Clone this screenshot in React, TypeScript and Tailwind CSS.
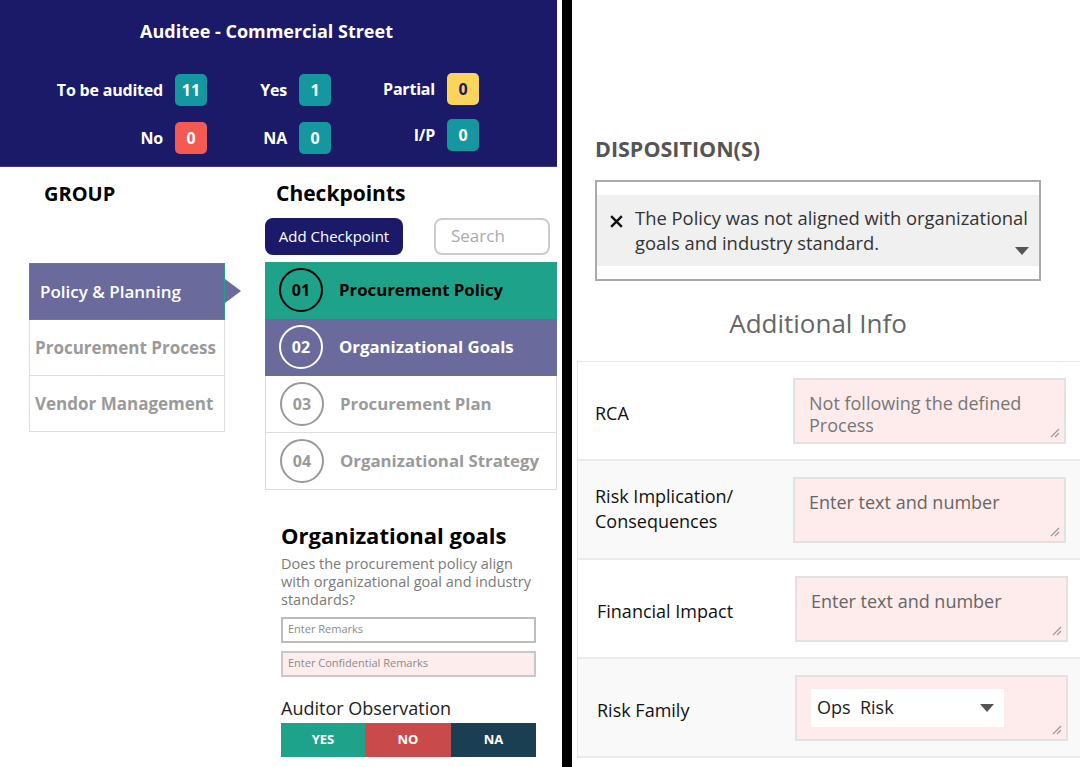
import React from "react";

const font = { fontFamily: '"Open Sans", "Liberation Sans", sans-serif' };

const STATS = [
  [
    { label: "To be audited", value: "11", tone: "teal" },
    { label: "Yes", value: "1", tone: "teal" },
    { label: "Partial", value: "0", tone: "yellow" },
  ],
  [
    { label: "No", value: "0", tone: "red" },
    { label: "NA", value: "0", tone: "teal" },
    { label: "I/P", value: "0", tone: "teal" },
  ],
];

const toneClass: Record<string, string> = {
  teal: "bg-[#14979f] text-white",
  red: "bg-[#f45a52] text-white",
  yellow: "bg-[#fad45b] text-[#1a1a68]",
};

const GROUPS = ["Policy & Planning", "Procurement Process", "Vendor Management"];

const CHECKPOINTS = [
  { no: "01", title: "Procurement Policy", state: "done" },
  { no: "02", title: "Organizational Goals", state: "active" },
  { no: "03", title: "Procurement Plan", state: "idle" },
  { no: "04", title: "Organizational Strategy", state: "idle" },
];

function ResizeHandle() {
  return (
    <svg
      className="absolute right-[4px] bottom-[4px]"
      width="11"
      height="11"
      viewBox="0 0 11 11"
    >
      <path d="M10 2 L2 10 M10 6 L6 10" stroke="#9a9a9a" strokeWidth="1.2" />
    </svg>
  );
}

function Caret({ className }: { className?: string }) {
  return (
    <svg className={className} width="14" height="8" viewBox="0 0 14 8">
      <path d="M0 0 H14 L7 8 Z" fill="#555" />
    </svg>
  );
}

function Header() {
  return (
    <div className="h-[167px] bg-[#1a1a68] border-b border-[#3a3a8a] text-white">
      <div className="pt-[18px] text-center text-[18px] font-bold pr-[24px]">
        Auditee - Commercial Street
      </div>
      <div className="mt-[29px] ml-[40px] grid grid-cols-[167px_124px_148px] gap-y-[16px]">
        {STATS.flatMap((row, r) =>
          row.map((s, c) => (
            <div
              key={`${r}-${c}`}
              className={
                "flex items-center justify-end gap-[12px] " +
                (c === 2 ? "-mt-[3px]" : "") +
                (c === 2 && r === 1 ? " -mt-[6px]" : "")
              }
            >
              <span className="text-[16px] font-bold tracking-[-0.2px]">{s.label}</span>
              <span
                className={
                  "w-[32px] h-[32px] rounded-[5px] flex items-center justify-center text-[16px] font-bold " +
                  toneClass[s.tone]
                }
              >
                {s.value}
              </span>
            </div>
          ))
        )}
      </div>
    </div>
  );
}

function GroupColumn() {
  return (
    <div className="w-[265px] shrink-0">
      <div className="pl-[44px] pt-[12px] text-[20px] font-bold text-black">GROUP</div>
      <div className="mt-[54px] ml-[29px] w-[196px]">
        {GROUPS.map((g, i) =>
          i === 0 ? (
            <div
              key={g}
              className="relative h-[57px] bg-[#6b6a9d] border border-[#1ea38a] flex items-center pl-[10px] text-[17px] font-semibold text-white"
            >
              {g}
              <span className="absolute right-[-17px] top-[15px] w-0 h-0 border-y-[12px] border-y-transparent border-l-[16px] border-l-[#6b6a9d]" />
            </div>
          ) : (
            <div
              key={g}
              className="h-[56px] border border-t-0 border-[#dddddd] flex items-center pl-[5px] text-[17px] font-bold text-[#9a9a9a]"
            >
              {g}
            </div>
          )
        )}
      </div>
    </div>
  );
}

function CheckpointColumn() {
  return (
    <div className="w-[292px] shrink-0">
      <div className="pl-[11px] pt-[11px] text-[21px] font-bold text-black">Checkpoints</div>
      <div className="mt-[8px] flex items-center justify-between pr-[7px]">
        <button
          type="button"
          className="w-[138px] h-[37px] rounded-[8px] bg-[#1a1a68] text-white text-[15px]"
        >
          Add Checkpoint
        </button>
        <div className="w-[116px] h-[37px] rounded-[8px] border-2 border-[#cccccc] flex items-center pl-[15px] text-[17px] text-[#aaaaaa]">
          Search
        </div>
      </div>
      <div className="mt-[7px]">
        {CHECKPOINTS.map((c) => {
          const row =
            c.state === "done"
              ? "bg-[#1ea38a] text-black"
              : c.state === "active"
              ? "bg-[#6b6a9d] text-white"
              : "bg-white text-[#9a9a9a] border border-t-0 border-[#dddddd]";
          const ring =
            c.state === "done"
              ? "border-black"
              : c.state === "active"
              ? "border-white"
              : "border-[#999999]";
          return (
            <div key={c.no} className={"h-[57px] flex items-center pl-[14px] " + row}>
              <span
                className={
                  "w-[44px] h-[44px] rounded-full border-2 flex items-center justify-center text-[16px] font-bold " +
                  ring
                }
              >
                {c.no}
              </span>
              <span className="ml-[16px] text-[16.8px] font-bold">{c.title}</span>
            </div>
          );
        })}
      </div>

      <div className="pl-[16px] pr-[21px]">
        <div className="mt-[30px] text-[22px] font-bold text-black leading-[30px]">
          Organizational goals
        </div>
        <div className="mt-[5px] text-[14.5px] leading-[18px] text-[#7a7a7a]">
          Does the procurement policy align with organizational goal and industry standards?
        </div>
        <div className="mt-[8px] h-[26px] border-2 border-[#bdbdbd] flex items-center pl-[5px] text-[11px] text-[#8a8a8a]">
          Enter Remarks
        </div>
        <div className="mt-[8px] h-[26px] border-2 border-[#c8c8c8] bg-[#fdeeed] flex items-center pl-[5px] text-[11px] text-[#8a8a8a]">
          Enter Confidential Remarks
        </div>
        <div className="mt-[19px] text-[18px] leading-[24px] text-[#222222]">Auditor Observation</div>
        <div className="mt-[3px] flex h-[34px] text-white text-[13px] font-bold">
          <div className="w-[84px] bg-[#1ea38a] flex items-center justify-center">YES</div>
          <div className="w-[86px] bg-[#c94a4a] flex items-center justify-center">NO</div>
          <div className="flex-1 bg-[#1b3f52] flex items-center justify-center">NA</div>
        </div>
      </div>
    </div>
  );
}

const INFO_ROWS = [
  { label: "RCA", value: "Not following the defined Process", filled: true },
  { label: "Risk Implication/ Consequences", value: "Enter text and number" },
  { label: "Financial Impact", value: "Enter text and number" },
  { label: "Risk Family", select: "Ops  Risk" },
];

function RightPanel() {
  return (
    <div className="flex-1 bg-white">
      <div className="pl-[23px] pt-[133px] text-[21.5px] font-bold text-[#555555]">DISPOSITION(S)</div>
      <div className="ml-[23px] mt-[15px] w-[446px] h-[101px] border-2 border-[#aaaaaa] flex items-center">
        <div className="relative w-full h-[71px] bg-[#f0f0f0] flex pl-[12px] pt-[10px]">
          <svg className="mt-[9px] shrink-0" width="15" height="15" viewBox="0 0 14 14">
            <path d="M2 2 L12 12 M12 2 L2 12" stroke="#111" strokeWidth="2.2" />
          </svg>
          <div className="ml-[11px] text-[18.4px] leading-[25px] text-[#333333]">
            The Policy was not aligned with organizational goals and industry standard.
          </div>
          <Caret className="absolute right-[10px] bottom-[11px]" />
        </div>
      </div>
      <div className="mt-[23px] pl-[23px] w-[469px] text-center text-[26px] text-[#666666]">
        Additional Info
      </div>
      <div className="mt-[18px] ml-[5px] border-t border-l border-[#e6e6e6]">
        {INFO_ROWS.map((r, i) => (
          <div
            key={r.label}
            className={
              "h-[99px] border-b-2 border-[#ebebeb] flex items-center " +
              (i % 2 === 1 ? "bg-[#f9f9f9]" : "bg-white")
            }
          >
            <div
              className={
                "w-[215px] shrink-0 text-[18px] leading-[25px] text-[#111111] pr-[40px] " +
                (i === 1 ? "-mt-[2px] " : "pt-[6px] ") +
                (i >= 2 ? "pl-[19px]" : "pl-[17px]")
              }
            >
              {r.label}
            </div>
            <div
              className={
                "relative h-[66px] w-[273px] border-2 border-[#e2e2e2] bg-[#fdeceb] " +
                (i >= 2 ? "ml-[2px]" : "")
              }
            >
              {r.select ? (
                <div className="absolute left-[14px] top-[12px] w-[193px] h-[38px] bg-white flex items-center pl-[6px] text-[18px] text-[#222222]">
                  <span className="whitespace-pre">{r.select}</span>
                  <Caret className="absolute right-[10px] top-[15px]" />
                </div>
              ) : (
                <div
                  className={
                    "pl-[14px] pr-[16px] pt-[12px] text-[18px] leading-[22px] " +
                    (r.filled ? "text-[#777777]" : "text-[#666666]")
                  }
                >
                  {r.value}
                </div>
              )}
              <ResizeHandle />
            </div>
          </div>
        ))}
      </div>
    </div>
  );
}

export default function App() {
  return (
    <div className="w-[1080px] h-[767px] overflow-hidden flex bg-white" style={font}>
      <div className="w-[557px] shrink-0 bg-white">
        <Header />
        <div className="flex">
          <GroupColumn />
          <CheckpointColumn />
        </div>
      </div>
      <div className="w-[5px] shrink-0 bg-white" />
      <div className="w-[10px] shrink-0 bg-black" />
      <RightPanel />
    </div>
  );
}
